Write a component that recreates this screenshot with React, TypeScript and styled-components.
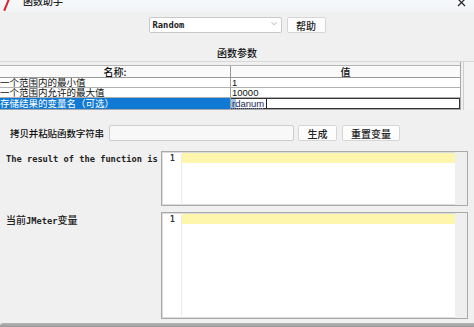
import React from 'react';
import styled, { createGlobalStyle } from 'styled-components';

const cjk = `"Noto Sans CJK SC", "Noto Sans", sans-serif`;
const mono = `"DejaVu Sans Mono", "Noto Sans CJK SC", monospace`;

const GlobalStyle = createGlobalStyle`
  html, body {
    margin: 0;
    padding: 0;
    width: 474px;
    height: 327px;
    overflow: hidden;
    background: #f0f0f0;
  }
  * {
    box-sizing: border-box;
  }
`;

const params = [
  { name: '一个范围内的最小值', value: '1' },
  { name: '一个范围内允许的最大值', value: '10000' },
];

const TitleIcon = () => (
  <svg width='10' height='12' viewBox='0 0 10 12'>
    <path d='M8 -1 L3.5 10' stroke='#d8262b' strokeWidth='2' strokeLinecap='round' />
  </svg>
);

const CloseIcon = () => (
  <svg width='9' height='8' viewBox='0 0 9 8'>
    <path d='M1 -1 L8 6 M8 -1 L1 6' stroke='#222' strokeWidth='1.2' />
  </svg>
);

const Editor = ({ height }: { height: number }) => (
  <EditorBox $height={height}>
    <Gutter>1</Gutter>
    <Lines>
      <CurrentLine />
    </Lines>
    <EditorScroll />
  </EditorBox>
);

const App = () => {
  return (
    <Window>
      <GlobalStyle />
      <TitleBar>
        <TitleIcon />
        <TitleText>函数助手</TitleText>
        <CloseButton>
          <CloseIcon />
        </CloseButton>
      </TitleBar>
      <Body>
        <Toolbar>
          <Select>
            <span>Random</span>
            <Chevron>⌵</Chevron>
          </Select>
          <Button $width={39}>帮助</Button>
        </Toolbar>
        <SectionTitle>函数参数</SectionTitle>
        <TablePane>
          <Table>
            <HeaderRow>
              <HeaderCell>名称:</HeaderCell>
              <HeaderCell>值</HeaderCell>
            </HeaderRow>
            {params.map((p) => (
              <Row key={p.name}>
                <NameCell>{p.name}</NameCell>
                <ValueCell>{p.value}</ValueCell>
              </Row>
            ))}
            <Row>
              <NameCell $selected>存储结果的变量名（可选）</NameCell>
              <EditCell>
                <EditText>rdanum</EditText>
                <Caret />
              </EditCell>
            </Row>
          </Table>
          <PaneRest />
        </TablePane>
        <CopyRow>
          <CopyLabel>拷贝并粘贴函数字符串</CopyLabel>
          <TextInput />
          <Button $width={39}>生成</Button>
          <Button $width={58}>重置变量</Button>
        </CopyRow>
        <OutputSection $gap={10}>
          <OutputLabel>The result of the function is</OutputLabel>
          <Editor height={55} />
        </OutputSection>
        <OutputSection $gap={6}>
          <OutputLabel>
            <Cjk>当前</Cjk>JMeter<Cjk>变量</Cjk>
          </OutputLabel>
          <Editor height={107} />
        </OutputSection>
      </Body>
      <BottomEdge />
    </Window>
  );
};

const Window = styled.div`
  width: 474px;
  height: 327px;
  display: flex;
  flex-direction: column;
  background: #f0f0f0;
  color: #111;
`;

const TitleBar = styled.div`
  height: 14px;
  display: flex;
  align-items: flex-start;
  padding: 0 8px 0 1px;
  background: linear-gradient(#f6f9fc, #f1f3f5);
`;

const TitleText = styled.div`
  font-family: ${cjk};
  font-size: 10px;
  line-height: 10px;
  margin: -4px 0 0 12px;
  color: #222;
  font-weight: 500;
`;

const CloseButton = styled.div`
  margin-left: auto;
  display: flex;
`;

const Body = styled.div`
  flex: 1;
  display: flex;
  flex-direction: column;
`;

const Toolbar = styled.div`
  display: flex;
  justify-content: center;
  gap: 5px;
  padding-top: 5px;
`;

const Select = styled.div`
  width: 133px;
  height: 16px;
  border: 1px solid #c9c9c9;
  border-radius: 2px;
  background: #fff;
  display: flex;
  align-items: center;
  padding: 0 4px 0 3px;
  font-family: ${mono};
  font-size: 8.8px;
  font-weight: bold;
  color: #222;
`;

const Chevron = styled.span`
  margin-left: auto;
  font-family: "DejaVu Sans", sans-serif;
  font-size: 8px;
  color: #777;
  font-weight: normal;
  transform: translateY(-2px);
`;

const Button = styled.div<{ $width: number }>`
  width: ${(p) => p.$width}px;
  height: 16px;
  border: 1px solid #d6d6d6;
  border-radius: 2px;
  background: #fdfdfd;
  display: flex;
  align-items: center;
  justify-content: center;
  font-family: ${cjk};
  font-size: 10px;
  font-weight: 500;
  color: #222;
`;

const SectionTitle = styled.div`
  margin-top: 14px;
  height: 14px;
  line-height: 12px;
  text-align: center;
  font-family: ${cjk};
  font-size: 10px;
  font-weight: 500;
`;

const TablePane = styled.div`
  display: flex;
  border-top: 1px solid #d8d8d8;
`;

const Table = styled.div`
  width: 461px;
  padding-top: 3px;
  border-right: 1px solid #a8a8a8;
  border-bottom: 1px solid #a8a8a8;
  background: linear-gradient(#f0f0f0 3px, #fff 3px);
`;

const PaneRest = styled.div`
  flex: 1;
  margin-left: 2px;
  border-left: 1px solid #cfcfcf;
  background: #f3f3f3;
`;

const HeaderRow = styled.div`
  display: grid;
  grid-template-columns: 231px 1fr;
  height: 13px;
  border-top: 1px solid #b5b5b5;
  border-bottom: 1px solid #9a9a9a;
  background: #fafafa;
`;

const HeaderCell = styled.div`
  font-family: ${cjk};
  font-size: 10px;
  line-height: 11px;
  text-align: center;
  font-weight: 500;
  &:first-child {
    border-right: 1px solid #9a9a9a;
  }
`;

const Row = styled.div`
  display: grid;
  grid-template-columns: 231px 1fr;
  height: 10px;
  border-bottom: 1px solid #b0b0b0;
  &:last-child {
    height: 11px;
    border-bottom: none;
  }
`;

const NameCell = styled.div<{ $selected?: boolean }>`
  display: flex;
  align-items: center;
  font-family: ${cjk};
  font-size: 9.5px;
  line-height: 9px;
  white-space: nowrap;
  border-right: 1px solid #a0a0a0;
  background: ${(p) => (p.$selected ? '#0f79d3' : '#fff')};
  color: ${(p) => (p.$selected ? '#fff' : '#111')};
`;

const ValueCell = styled.div`
  display: flex;
  align-items: center;
  font-family: "Liberation Sans", sans-serif;
  font-size: 9.5px;
  line-height: 9px;
  padding-left: 1px;
`;

const EditCell = styled.div`
  display: flex;
  align-items: center;
  border: 1px solid #333;
  border-left: none;
  background: #fff;
`;

const EditText = styled.span`
  font-family: "Liberation Sans", sans-serif;
  font-size: 9.5px;
  line-height: 9px;
  padding-left: 1px;
  background: linear-gradient(90deg, #9cc3ea 0 5px, transparent 5px);
  color: #1b2b5a;
  text-decoration: underline dotted #6a7ab0;
`;

const Caret = styled.span`
  width: 1px;
  height: 9px;
  margin-left: 2px;
  background: #222;
`;

const CopyRow = styled.div`
  display: flex;
  align-items: center;
  margin-top: 15px;
  padding-left: 10px;
  height: 16px;
  gap: 4px;
  & > *:last-child {
    margin-left: 1px;
  }
`;

const CopyLabel = styled.div`
  width: 95px;
  font-family: ${cjk};
  font-size: 9.5px;
  font-weight: 500;
  white-space: nowrap;
  letter-spacing: -0.1px;
`;

const TextInput = styled.div`
  width: 185px;
  height: 16px;
  border: 1px solid #cdcdcd;
  border-radius: 2px;
  background: #f8f8f8;
`;

const OutputSection = styled.div<{ $gap: number }>`
  display: grid;
  grid-template-columns: 155px 307px;
  margin-top: ${(p) => p.$gap}px;
  padding-left: 6px;
`;

const OutputLabel = styled.div`
  font-family: ${mono};
  font-size: 8.7px;
  font-weight: bold;
  line-height: 10px;
  padding-top: 3px;
  white-space: nowrap;
  color: #222;
`;

const Cjk = styled.span`
  font-family: ${cjk};
  font-size: 10px;
  font-weight: 500;
`;

const EditorBox = styled.div<{ $height: number }>`
  height: ${(p) => p.$height}px;
  display: flex;
  border: 1px solid #a9a9a9;
  box-shadow: inset 0 0 0 1px #dcdcdc;
  background: #fff;
`;

const Gutter = styled.div`
  width: 20px;
  padding: 2px 0 0 8px;
  font-family: ${mono};
  font-size: 8px;
  font-weight: bold;
  line-height: 10px;
  color: #333;
  border-right: 1px solid #ececec;
`;

const Lines = styled.div`
  flex: 1;
  padding-top: 1px;
`;

const CurrentLine = styled.div`
  height: 10px;
  background: #fff6ad;
`;

const EditorScroll = styled.div`
  width: 12px;
  background: #efefef;
`;

const BottomEdge = styled.div`
  height: 5px;
  margin-top: 4px;
  background: linear-gradient(#b4b4b4, #9a9a9a);
  border-top-left-radius: 3px;
`;

export default App;
